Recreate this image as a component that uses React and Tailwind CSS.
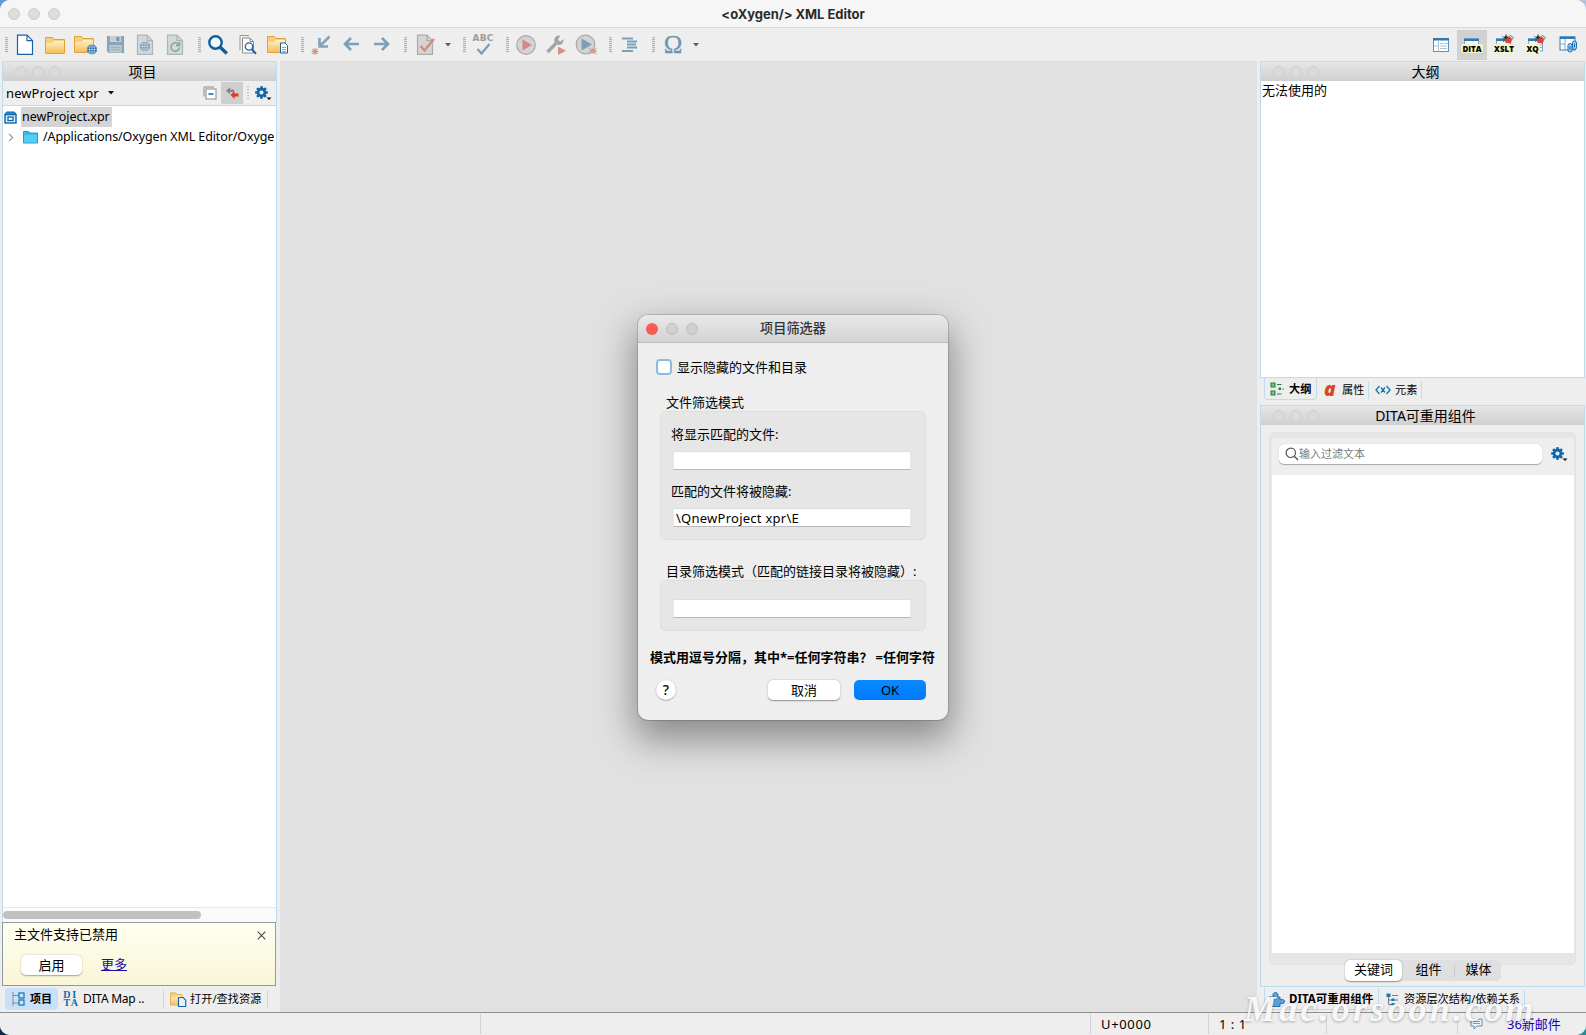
import React from "react";

function Slot({ w = "w-[30px]", children }) {
  return <div className={`flex h-full shrink-0 items-center justify-center ${w}`}>{children}</div>;
}

function Grip({ w = "w-[13px]" }) {
  return (
    <div className={`flex h-full shrink-0 items-center justify-end pr-[2px] ${w}`}>
      <div className="h-[16px] w-[3px] bg-[repeating-linear-gradient(to_bottom,#b4b4b4_0px,#b4b4b4_1px,#e4e4e4_1px,#e4e4e4_2px)]" />
    </div>
  );
}

function Caret({ color = "#5f5f5f" }) {
  return (
    <svg width="6" height="4" viewBox="0 0 6 4">
      <path d="M0 0h6L3 3.6z" fill={color} />
    </svg>
  );
}

const Doc = ({ fill = "#fff", stroke = "#1b62a4", children, ...p }) => (
  <svg width="22" height="22" viewBox="0 0 22 22" {...p}>
    <path d="M3.500 1.200h9.500l5.500 5.500V20.300h-15z" fill={fill} stroke={stroke} strokeWidth="1.2" />
    <path d="M13 1.200v5.500h5.500" fill="none" stroke={stroke} strokeWidth="1.2" />
    {children}
  </svg>
);

const FolderShape = ({ w = 20 }) => (
  <>
    <path d={`M0.5 18.5V2.5h7l1.5 2h${w - 9.5}v14z`} fill="#f7d07c" stroke="#e0a23c" />
    <path d={`M1 18V8h6.5l1.5-2h${w - 10}v12z`} fill="url(#folderFill)" />
  </>
);

const Globe = ({ x, y, r = 5, color = "#1f6aa5" }) => (
  <g transform={`translate(${x} ${y})`}>
    <circle r={r} fill={color} />
    <path d={`M${-r} 0H${r}M0 ${-r}V${r}M${-r + 1} ${-r / 2}H${r - 1}M${-r + 1} ${r / 2}H${r - 1}`} stroke="#d6e8f5" strokeWidth="0.6" fill="none" />
    <ellipse rx={r / 2} ry={r} fill="none" stroke="#d6e8f5" strokeWidth="0.6" />
  </g>
);

const SmallDoc = () => (
  <g>
    <path d="M0.5 0.5h4.5l2.5 2.5v7.5h-7z" fill="#fff" stroke="#1b62a4" />
    <path d="M2 5h4M2 7h4M2 9h4" stroke="#5b93bd" strokeWidth="0.8" />
  </g>
);

function Defs() {
  return (
    <svg className="absolute" width="0" height="0">
      <defs>
        <linearGradient id="folderFill" x1="0" y1="0" x2="0" y2="1">
          <stop offset="0" stopColor="#fff0c4" />
          <stop offset="1" stopColor="#f6bf58" />
        </linearGradient>
      </defs>
    </svg>
  );
}

function Gear() {
  return (
    <svg width="17" height="15" viewBox="0 0 17 15" className="shrink-0">
      <g transform="translate(6.5 6.5)">
        <circle r="3.4" fill="none" stroke="#0f66aa" strokeWidth="2.6" />
        {[0, 45, 90, 135, 180, 225, 270, 315].map((a) => (
          <rect key={a} x="-1.3" y="-6.3" width="2.6" height="2.8" fill="#0f66aa" transform={`rotate(${a})`} />
        ))}
      </g>
      <path d="M11.5 11.5h5l-2.5 2.6z" fill="#111" />
    </svg>
  );
}

function Toolbar() {
  return (
    <div className="flex h-[33px] shrink-0 items-center bg-[#eeeeee]">
      <Grip w="w-[10px]" />
      <Slot><Doc /></Slot>
      <Slot><svg width="21" height="20" viewBox="0 0 21 20"><FolderShape /></svg></Slot>
      <Slot>
        <svg width="24" height="21" viewBox="0 0 24 21" className="ml-[1px]"><FolderShape /><Globe x="18" y="15.5" /></svg>
      </Slot>
      <Slot>
        <svg width="19" height="19" viewBox="0 0 20 20">
          <path d="M1 1h18v18H3l-2-2z" fill="#87a4b8" />
          <rect x="4" y="1" width="12" height="6.5" fill="#c9d0d5" />
          <rect x="11" y="2" width="3" height="4.5" fill="#7593a8" />
          <rect x="3.5" y="10.5" width="13" height="8" fill="#bcc9d2" />
          <path d="M5 13h10M5 15.500h10" stroke="#98adbb" />
        </svg>
      </Slot>
      <Slot>
        <Doc fill="#d5d7d8" stroke="#b1b4b6"><Globe x="11" y="12.500" color="#7095b2" /></Doc>
      </Slot>
      <Slot>
        <Doc fill="#d5d7d8" stroke="#b1b4b6">
          <path d="M14.600 10.500a4.200 4.200 0 1 0 .8 3M15.500 8v3.500h-3.500" fill="none" stroke="#7cac84" strokeWidth="1.500" />
        </Doc>
      </Slot>
      <Grip />
      <Slot>
        <svg width="22" height="22" viewBox="0 0 22 22">
          <circle cx="8.500" cy="8.500" r="6.200" fill="#f4f8fb" stroke="#0f5d9f" strokeWidth="2.400" />
          <path d="M13 13l6.800 6.500" stroke="#0f5d9f" strokeWidth="3.400" />
        </svg>
      </Slot>
      <Slot>
        <svg width="20" height="22" viewBox="0 0 20 22">
          <path d="M2 16V1.500h9" fill="none" stroke="#999" />
          <path d="M4.500 19V4h7.500l3.500 3.500V19z" fill="#fff" stroke="#8b8b8b" />
          <path d="M12 4v3.500h3.500" fill="none" stroke="#8b8b8b" />
          <circle cx="11" cy="12.500" r="3.700" fill="#fff" stroke="#1b62a4" strokeWidth="1.300" />
          <path d="M13.700 15.200l4.300 4.500" stroke="#1b62a4" strokeWidth="2" />
        </svg>
      </Slot>
      <Slot>
        <svg width="22" height="21" viewBox="0 0 22 21"><FolderShape w={19} /><g transform="translate(13 8.500)"><SmallDoc /></g></svg>
      </Slot>
      <Grip />
      <Slot>
        <svg width="20" height="20" viewBox="0 0 20 20">
          <path d="M18.500 1.500L9 11M8.500 3v8.500H17" fill="none" stroke="#83a3b9" strokeWidth="2.600" />
          <path d="M4 13v7M.5 16.500h7M1.500 14l5 5M6.500 14l-5 5" stroke="#d39388" strokeWidth="1.100" />
        </svg>
      </Slot>
      <Slot>
        <svg width="17" height="14" viewBox="0 0 17 14" className="mb-[1px]"><path d="M16 7H2M8 1L2 7l6 6" fill="none" stroke="#7a9fb8" strokeWidth="2.600" /></svg>
      </Slot>
      <Slot>
        <svg width="17" height="14" viewBox="0 0 17 14" className="mb-[1px]"><path d="M1 7h14M9 1l6 6-6 6" fill="none" stroke="#7a9fb8" strokeWidth="2.600" /></svg>
      </Slot>
      <Grip />
      <Slot w="w-[32px]">
        <Doc fill="#d4d4d4" stroke="#ababab"><path d="M6.500 12l4 4.500L20 5" fill="none" stroke="#d58a80" strokeWidth="2.400" /></Doc>
      </Slot>
      <Slot w="w-[14px]"><Caret /></Slot>
      <Grip />
      <Slot>
        <div className="flex flex-col items-center">
          <span className="font-['DejaVu_Sans'] text-[9px] leading-[9px] font-bold tracking-[0.2px] text-[#9d9d9d]">ABC</span>
          <svg width="15" height="12" viewBox="0 0 15 12"><path d="M1.500 6l4 4.500L13.500 1" fill="none" stroke="#7a9fb8" strokeWidth="2.300" /></svg>
        </div>
      </Slot>
      <Grip />
      <Slot>
        <svg width="22" height="22" viewBox="0 0 22 22">
          <circle cx="11" cy="11" r="9.300" fill="#d3d3d3" stroke="#a8a8a8" strokeWidth="1.200" />
          <path d="M7.500 5.500v11l9.500-5.500z" fill="#d18a82" />
        </svg>
      </Slot>
      <Slot>
        <svg width="22" height="22" viewBox="0 0 22 22">
          <path d="M2.500 18L11 9.500" stroke="#a3a3a3" strokeWidth="3.400" />
          <path d="M15 1.500a5 5 0 0 0-5.500 6.500l3.500 3a5 5 0 0 0 5.500-6l-3.500 2.800-2-2z" fill="#a3a3a3" />
          <path d="M13 12.500v8.500l8-4.200z" fill="#d58f86" />
        </svg>
      </Slot>
      <Slot>
        <svg width="22" height="22" viewBox="0 0 22 22">
          <circle cx="10.500" cy="10.500" r="9.300" fill="#d3d3d3" stroke="#a8a8a8" strokeWidth="1.200" />
          <path d="M6.500 4.500v12L17 10.500z" fill="#7a9fb8" />
          <circle cx="18" cy="17" r="2.600" fill="#d09a92" />
          <path d="M14 14l8 6.500M22 14l-8 6.500M14 17.200h8" stroke="#d09a92" strokeWidth="0.900" />
        </svg>
      </Slot>
      <Grip />
      <Slot>
        <svg width="17" height="16" viewBox="0 0 17 16">
          <path d="M1 1.500h11M6 4.500h10M6 7.500h9M6 10.500h10M1 14h11" stroke="#7a9fb8" strokeWidth="1.900" />
        </svg>
      </Slot>
      <Grip />
      <Slot w="w-[32px]">
        <span className="font-['Liberation_Serif'] text-[25px] leading-[24px] text-[#6d96b3] [-webkit-text-stroke:0.3px_#6d96b3]">Ω</span>
      </Slot>
      <Slot w="w-[14px]"><Caret /></Slot>
      <div className="ml-auto flex h-full items-center pr-[1px]">
        <Slot w="w-[29px]"><LayoutIcon /></Slot>
        <div className="ml-[2px] flex h-[30px] w-[30px] items-center justify-center bg-[#d1d1d1]"><LabelIcon text="DITA" /></div>
        <div className="flex w-[34px] items-center justify-center"><LabelIcon text="XSLT" bug /></div>
        <div className="flex w-[30px] items-center justify-center"><LabelIcon text="XQ" bug /></div>
        <Slot w="w-[34px]">
          <svg width="19" height="17" viewBox="0 0 19 17">
            <rect x="1" y="1" width="15" height="13" fill="#fff" stroke="#3b7cb0" />
            <rect x="1" y="0.500" width="15" height="2.500" fill="#2f79b6" />
            <path d="M6 3v11M1 8h5" stroke="#7ea9ca" />
            <rect x="9" y="7.500" width="4" height="8.500" rx="2" fill="#a9d2f0" stroke="#1b69ac" />
            <rect x="13.500" y="5" width="4" height="8.500" rx="2" fill="#a9d2f0" stroke="#1b69ac" />
            <path d="M11 14V10M15.500 11.500v-4" stroke="#1b69ac" />
          </svg>
        </Slot>
      </div>
    </div>
  );
}

function LayoutIcon() {
  return (
    <svg width="16" height="14" viewBox="0 0 16 14">
      <rect x="0.500" y="0.500" width="15" height="13" fill="#fff" stroke="#5c93bd" />
      <rect x="0" y="0" width="16" height="2.500" fill="#2f79b6" />
      <path d="M5.500 2.500v11M1 8h4M7 5.500h4M12 5.500h3M7 8h7M7 10.500h7" stroke="#a5c5de" />
    </svg>
  );
}

function LabelIcon({ text, bug = false }) {
  return (
    <div className={`flex w-[21px] flex-col ${text === "XQ" ? "items-start" : "items-center"}`}>
      <svg width="20" height="8" viewBox="0 0 20 8" className="overflow-visible">
        <rect x="2.500" y="3" width="14" height={text === "XQ" ? 12 : 6} fill="#f5f9fc" stroke="#7fabcd" />
        <rect x="2" y="2.500" width="15" height="2.500" fill="#2f79b6" />
        {text === "XQ" && <path d="M13 9h3M13 11.500h3" stroke="#7fabcd" />}
        {bug && (
          <g>
            <path d="M8 0l9 8M17-1l-8 7M12-2v9M9 3h10M17 0l3 2" stroke="#444" strokeWidth="0.700" />
            <circle cx="14.500" cy="4" r="3.300" fill="#dc4038" />
            <circle cx="12" cy="1.200" r="1.700" fill="#333" />
          </g>
        )}
      </svg>
      <span className="relative rounded-[2px] bg-[#f6f3c4] px-[1px] font-['Open_Sans'] text-[8px] leading-[9px] font-extrabold text-black">{text}</span>
    </div>
  );
}

function PanelHeader({ title }) {
  return (
    <div className="grid h-[20px] shrink-0 grid-cols-[1fr_auto_1fr] items-center border-t border-[#bcdcf2] bg-linear-to-b from-[#e6e6e6] to-[#cfcfcf]">
      <div className="flex gap-[5px] pl-[12px]">
        {[0, 1, 2].map((i) => (
          <div key={i} className="h-[12px] w-[12px] rounded-full border border-[#cfcfcf] bg-[#dadada]" />
        ))}
      </div>
      <div className="pt-[1px] pl-[6px] text-[14px] leading-[18px]">{title}</div>
      <div />
    </div>
  );
}

function LeftPanel() {
  return (
    <div className="flex w-[280px] shrink-0 flex-col pl-[2px]">
      <div className="flex h-[862px] w-[275px] flex-col border-x border-[#bcdcf2]">
        <PanelHeader title="项目" />
        <div className="flex h-[25px] shrink-0 items-center border-b border-[#bcdcf2] pl-[3px]">
          <span className="w-[94px] pt-[2px] text-[13px] tracking-[0.1px] whitespace-nowrap">newProject xpr</span>
          <span className="ml-[8px]"><Caret color="#111" /></span>
          <svg width="14" height="14" viewBox="0 0 14 14" className="ml-[89px] shrink-0">
            <path d="M1 10.500V1h10" fill="none" stroke="#8a8a8a" />
            <rect x="3" y="3" width="10" height="10" fill="#fff" stroke="#8a8a8a" />
            <path d="M5.500 8h5" stroke="#1b62a4" strokeWidth="1.300" />
          </svg>
          <div className="ml-[4px] flex h-[22px] w-[22px] shrink-0 items-center justify-center bg-[#cfcfcf]">
            <svg width="13" height="12" viewBox="0 0 13 12">
              <path d="M0 3.800L4 .3v2.200h4v2.600H4v2.200z" fill="#868686" />
              <path d="M4.500 8L8.500 4v2.600H12.500v2.800H8.500V12z" fill="#dd3d22" />
            </svg>
          </div>
          <div className="mr-[6px] ml-[4px] h-[14px] w-[2px] shrink-0 bg-[repeating-linear-gradient(to_bottom,#bdbdbd_0px,#bdbdbd_1px,#eeeeee_1px,#eeeeee_3px)]" />
          <Gear />
        </div>
        <div className="min-h-0 flex-1 overflow-hidden bg-white pt-[1px]">
          <div className="flex h-[20px] items-center">
            <svg width="13" height="13" viewBox="0 0 13 13" className="ml-[1px] shrink-0">
              <path d="M1 3.500L2.500 1h8L12 3.500z" fill="#3d90c9" stroke="#0f66aa" />
              <rect x="1" y="3.500" width="11" height="8.500" fill="#d7ecfa" stroke="#0f66aa" strokeWidth="1.400" />
              <rect x="4" y="6" width="5" height="3.500" fill="#fff" stroke="#0f66aa" strokeWidth="1.300" />
            </svg>
            <span className="ml-[4px] flex h-[20px] w-[91px] items-center bg-[#d4d4d4] pl-[1px] text-[12.500px] tracking-[-0.020px] whitespace-nowrap">newProject.xpr</span>
          </div>
          <div className="flex h-[20px] items-center">
            <svg width="6" height="9" viewBox="0 0 6 9" className="ml-[5px] shrink-0"><path d="M1 .8l3.700 3.700L1 8.200" fill="none" stroke="#9a9a9a" strokeWidth="1.200" /></svg>
            <svg width="15" height="14" viewBox="0 0 15 14" className="ml-[9px] shrink-0">
              <path d="M0.500 13V1.500h5L7 3h7.500v10z" fill="#3bb7e8" stroke="#1f9fd3" />
              <path d="M1 12.500V5h13v7.500z" fill="#57cdf6" />
            </svg>
            <span className="ml-[5px] text-[12.500px] tracking-[-0.110px] whitespace-nowrap">/Applications/Oxygen XML Editor/Oxyge</span>
          </div>
        </div>
        <div className="h-[16px] shrink-0 border-t border-[#e8e8e8] bg-[#fafafa] pt-[3px]">
          <div className="h-[8px] w-[198px] rounded-full bg-[#c1c1c1]" />
        </div>
      </div>
      <div className="-mt-[1px] flex h-[64px] w-[274px] shrink-0 flex-col border border-[#8d9da5] bg-linear-to-b from-[#fffff0] to-[#f9f5d6] px-[11px]">
        <div className="flex h-[24px] items-center justify-between">
          <span className="text-[13px]">主文件支持已禁用</span>
          <svg width="9" height="9" viewBox="0 0 9 9" className="-mr-[2px]"><path d="M.7.700l7.600 7.600M8.300.700L.7 8.300" stroke="#444" strokeWidth="1.100" /></svg>
        </div>
        <div className="mt-[7px] flex h-[22px] items-center">
          <button className="ml-[7px] h-[20px] w-[61px] rounded-[5px] bg-white text-[13px] leading-[18px] shadow-[0_0.5px_1.5px_rgba(0,0,0,0.35)]">启用</button>
          <a className="ml-[19px] text-[13px] text-[#1a0dab] underline">更多</a>
        </div>
      </div>
      <div className="mt-[1px] flex h-[23px] items-center text-[12px] leading-[20px]">
        <div className="ml-[3px] flex h-[22px] w-[53px] items-center rounded-[4px] bg-[#c8e1f7] pl-[7px]">
          <svg width="13" height="14" viewBox="0 0 13 14">
            <path d="M1 0v14M1 3.500h6M1 11h6" fill="none" stroke="#8a8a8a" />
            <rect x="7" y="1" width="5" height="5" fill="#cbe6f8" stroke="#1f79b8" strokeWidth="1.300" />
            <rect x="7" y="8" width="5" height="5" fill="#cbe6f8" stroke="#1f79b8" strokeWidth="1.300" />
          </svg>
          <span className="ml-[5px] text-[11px] font-bold">项目</span>
        </div>
        <div className="ml-[5px] flex w-[101px] items-center border-r border-[#bcdcf2]">
          <div className="grid w-[15px] grid-cols-2 justify-items-center font-['Liberation_Serif'] text-[10px] leading-[8px] font-bold text-[#0f6aa8]">
            <span>D</span><span>I</span><span>T</span><span>A</span>
          </div>
          <span className="ml-[5px] text-[12px] tracking-[-0.25px] whitespace-nowrap">DITA Map ..</span>
        </div>
        <div className="flex h-[18px] w-[104px] items-center border-r border-[#bcdcf2]">
          <svg width="17" height="16" viewBox="0 0 22 21" className="ml-[6px] shrink-0"><FolderShape w={16} /><path d="M11 8.500h6l3.500 3.500v8.500H11z" fill="#e7f3fb" stroke="#1b62a4" strokeWidth="1.500" /></svg>
          <span className="ml-[3px] text-[11.200px] whitespace-nowrap">打开/查找资源</span>
        </div>
      </div>
    </div>
  );
}

function RightPanel() {
  return (
    <div className="flex w-[329px] shrink-0 flex-col pr-[1px] pl-[3px]">
      <div className="flex h-[317px] shrink-0 flex-col border-x border-b border-[#bcdcf2]">
        <PanelHeader title="大纲" />
        <div className="flex-1 bg-white pl-[1px] text-[13px] leading-[18px]">无法使用的</div>
      </div>
      <div className="flex h-[27px] items-start pl-[4px] text-[11.200px] leading-[22px]">
        <div className="flex h-[22px] w-[53px] items-center rounded-b-[4px] border-x border-b border-[#bcdcf2] pl-[5px]">
          <svg width="14" height="14" viewBox="0 0 14 14">
            <rect x="1" y="1" width="4" height="4" fill="#76c28b" stroke="#24803d" />
            <rect x="1" y="9" width="4" height="4" fill="#76c28b" stroke="#24803d" />
            <path d="M7 2.500h4.500M7 12h4.500M12.500 7h1.500" stroke="#24803d" />
            <rect x="8.500" y="5.500" width="2.500" height="2.500" fill="#24803d" />
          </svg>
          <span className="ml-[5px] pt-[1px] font-bold">大纲</span>
        </div>
        <div className="mt-[3px] flex h-[18px] w-[52px] items-center border-r border-[#bcdcf2] pl-[7px]">
          <span className="w-[13px] pb-[3px] font-['Open_Sans'] text-[19px] leading-[16px] font-extrabold text-[#dc4521] italic">a</span>
          <span className="ml-[5px]">属性</span>
        </div>
        <div className="mt-[3px] flex h-[18px] w-[53px] items-center border-r border-[#bcdcf2] pl-[6px]">
          <svg width="16" height="10" viewBox="0 0 16 10"><path d="M4.500 1L1 5l3.500 4M11.500 1L15 5l-3.500 4M6 2.500l4 5M10 2.500l-4 5" fill="none" stroke="#1b71b3" strokeWidth="1.300" /></svg>
          <span className="ml-[4px]">元素</span>
        </div>
      </div>
      <div className="flex h-[582px] shrink-0 flex-col border-x border-b border-[#bcdcf2]">
        <PanelHeader title="DITA可重用组件" />
        <div className="mx-[8px] mt-[7px] flex h-[533px] flex-col rounded-[5px] border border-[#e2e2e2] bg-[#e6e6e6] pr-[1px] pl-[2px] pt-[5px] pb-[11px]">
          <div className="flex h-[37px] shrink-0 items-start bg-[#eeeeee] pt-[6px] pl-[7px]">
            <div className="flex h-[20px] w-[263px] items-center rounded-[5px] bg-white pl-[6px] shadow-[0_0.5px_1px_rgba(0,0,0,0.3)]">
              <svg width="14" height="14" viewBox="0 0 14 14"><circle cx="5.800" cy="5.800" r="4.700" fill="none" stroke="#555" strokeWidth="1.200" /><path d="M9.300 9.300l3.800 3.800" stroke="#555" strokeWidth="1.400" /></svg>
              <span className="text-[11px] leading-[20px] text-[#7b7b7b]">输入过滤文本</span>
            </div>
            <div className="mt-[3px] ml-[9px]"><Gear /></div>
          </div>
          <div className="flex-1 bg-white" />
        </div>
        <div className="relative -mt-[5px] ml-[84px] flex h-[21px] w-[156px] items-center rounded-[5px] bg-[#dfdfdf] text-[13px] leading-[19px]">
          <div className="h-[21px] w-[57px] rounded-[5px] bg-white text-center shadow-[0_0.5px_1.5px_rgba(0,0,0,0.4)]">关键词</div>
          <div className="h-[21px] w-[52px] pl-[1px] text-center">组件</div>
          <div className="h-[12px] w-px bg-[#c9c9c9]" />
          <div className="h-[21px] w-[46px] pl-[1px] text-center">媒体</div>
        </div>
      </div>
      <div className="flex h-[24px] items-center pl-[4px] text-[11.200px] leading-[20px]">
        <div className="flex h-[22px] w-[115px] items-center border-x border-b border-[#bcdcf2] pl-[3px]">
          <svg width="17" height="16" viewBox="0 0 17 16" className="shrink-0">
            <path d="M1 6h4.500c-1.500-3 .5-4.500 2-4.500s3.500 1.500 2 4.500H12v3c3-1.500 4.500 0 4.500 1.500s-1.500 3-4.500 1.500v3.500H3V12z" fill="#5aa3d8" stroke="#1f6fad" />
          </svg>
          <span className="ml-[4px] text-[11.500px] font-bold whitespace-nowrap">DITA可重用组件</span>
        </div>
        <div className="flex h-[18px] w-[146px] items-center border-r border-[#bcdcf2] pl-[7px]">
          <svg width="13" height="13" viewBox="0 0 13 13">
            <path d="M2.500 4v7.500H6M2.500 7H6M6 2.500h6M8 7h4M8 11.500h4" fill="none" stroke="#6a7f8d" />
            <rect x="0.500" y="0.500" width="4" height="3.500" fill="#1f79b8" />
            <rect x="5.500" y="5.500" width="3" height="2.500" fill="#1f79b8" />
            <rect x="5.500" y="10" width="3" height="2.500" fill="#1f79b8" />
          </svg>
          <span className="ml-[5px] whitespace-nowrap">资源层次结构/依赖关系</span>
        </div>
      </div>
    </div>
  );
}

function Field({ value = "" }) {
  return (
    <div className="h-[19px] w-[238px] border border-t-[#dedede] border-r-[#e6e6e6] border-b-[#b8b8b8] border-l-[#e6e6e6] bg-white pl-[2px] text-[13px] leading-[18px] tracking-[0.25px]">{value}</div>
  );
}

function Dialog() {
  return (
    <div className="absolute top-[315px] left-[638px] flex h-[405px] w-[310px] flex-col overflow-hidden rounded-[10px] bg-[#eeeeee] text-[13px] leading-[20px] shadow-[0_0_0_1px_rgba(0,0,0,0.15),0_16px_36px_4px_rgba(0,0,0,0.38)]">
      <div className="grid h-[28px] shrink-0 grid-cols-[1fr_auto_1fr] items-center border-b border-[#bdbdbd] bg-linear-to-b from-[#e9e9e9] to-[#d3d3d3]">
        <div className="flex gap-[8px] pl-[8px]">
          <div className="h-[12px] w-[12px] rounded-full bg-[#fc5b54]" />
          <div className="h-[12px] w-[12px] rounded-full border border-[#bfbfbf] bg-[#d0d0d0]" />
          <div className="h-[12px] w-[12px] rounded-full border border-[#bfbfbf] bg-[#d0d0d0]" />
        </div>
        <div className="pb-[1px] text-[13.200px] font-medium text-[#333]">项目筛选器</div>
        <div />
      </div>
      <div className="mt-[14px] ml-[18px] flex h-[20px] items-center">
        <div className="h-[16px] w-[16px] rounded-[4px] border-2 border-[#8dbbe9] bg-white" />
        <span className="ml-[5px]">显示隐藏的文件和目录</span>
      </div>
      <div className="mt-[15px] ml-[28px] h-[19px]">文件筛选模式</div>
      <div className="ml-[22px] h-[129px] w-[266px] shrink-0 rounded-[5px] border border-[#dedede] bg-[#e6e6e6] pl-[10px]">
        <div className="mt-[12px] h-[20px]">将显示匹配的文件:</div>
        <div className="mt-[7px] ml-[2px]"><Field /></div>
        <div className="mt-[11px] h-[20px]">匹配的文件将被隐藏:</div>
        <div className="mt-[7px] ml-[2px]"><Field value="\QnewProject xpr\E" /></div>
      </div>
      <div className="mt-[21px] ml-[28px] h-[19px] whitespace-nowrap">目录筛选模式（匹配的链接目录将被隐藏）:</div>
      <div className="ml-[22px] h-[51px] w-[266px] shrink-0 rounded-[5px] border border-[#dedede] bg-[#e6e6e6] pt-[18px] pl-[12px]">
        <Field />
      </div>
      <div className="mt-[16px] ml-[12px] h-[20px] font-bold whitespace-nowrap">模式用逗号分隔，其中*=任何字符串？<span className="ml-[3px]">=任何字符</span></div>
      <div className="mt-[13px] flex h-[20px] items-center pl-[18px]">
        <div className="h-[20px] w-[20px] rounded-full bg-white text-center text-[14px] leading-[20px] font-medium shadow-[0_0.5px_1.5px_rgba(0,0,0,0.4)]">?</div>
        <button className="ml-[92px] h-[20px] w-[72px] rounded-[5px] bg-white leading-[19px] shadow-[0_0.5px_1.5px_rgba(0,0,0,0.4)]">取消</button>
        <button className="ml-[14px] h-[20px] w-[72px] rounded-[5px] bg-linear-to-b from-[#0a8aff] to-[#0079fb] leading-[19px]">OK</button>
      </div>
    </div>
  );
}

function StatusBar() {
  return (
    <div className="flex h-[23px] shrink-0 items-center border-t border-[#8f8f8f] bg-[#eeeeee] text-[13px] leading-[20px]">
      <div className="h-[20px] w-[481px] border-r border-[#d2d2d2]" />
      <div className="h-[20px] w-[610px] border-r border-[#d2d2d2]" />
      <div className="h-[20px] w-[118px] border-r border-[#d2d2d2] pl-[10px] tracking-[0.65px]">U+0000</div>
      <div className="h-[20px] w-[118px] border-r border-[#d2d2d2] pl-[10px] tracking-[0.5px]">1 : 1</div>
      <div className="h-[20px] w-[131px] border-r border-[#d2d2d2]" />
      <svg width="13" height="12" viewBox="0 0 13 12" className="ml-[12px]">
        <path d="M1 1h11v7H7l-3 3V8H1z" fill="#eef6fb" stroke="#5f8cae" />
        <path d="M3 3.500h7M3 5.500h7" stroke="#5f8cae" strokeWidth="0.800" />
      </svg>
      <span className="ml-[24px] text-[#1500b8]">36新邮件</span>
    </div>
  );
}

export default function App() {
  return (
    <div className="relative h-[1035px] w-[1586px] overflow-hidden bg-[linear-gradient(to_right,#0d2b48_50%,#2a8c93_50%)] font-['Noto_Sans','Noto_Sans_CJK_SC',sans-serif] text-black">
      <Defs />
      <div className="absolute top-0 left-0 h-[20px] w-full bg-[linear-gradient(to_right,#5b9fd6_50%,#b3c4de_50%)]" />
      <div className="relative flex h-full w-full flex-col overflow-hidden rounded-[10px] bg-[#eeeeee]">
        <div className="grid h-[28px] shrink-0 grid-cols-[1fr_auto_1fr] items-center border-b border-[#d8d8d8] bg-[#f6f6f6]">
          <div className="flex gap-[8px] pl-[8px]">
            {[0, 1, 2].map((i) => (
              <div key={i} className="h-[12px] w-[12px] rounded-full border border-[#cdcdcd] bg-[#dddddd]" />
            ))}
          </div>
          <div className="font-['Inter'] text-[13px] leading-[26px] font-bold tracking-[-0.05px] text-[#2b2b2b]">&lt;oXygen/&gt; XML Editor</div>
          <div />
        </div>
        <Toolbar />
        <div className="flex h-[951px] shrink-0">
          <LeftPanel />
          <div className="flex-1 bg-[#e1e1e1]" />
          <RightPanel />
        </div>
        <StatusBar />
      </div>
      <Dialog />
      <div className="absolute top-[986px] left-[1244px] font-['Liberation_Serif'] text-[36px] leading-[46px] font-bold tracking-[3.2px] whitespace-nowrap text-white/90 italic [text-shadow:0_1px_3px_rgba(0,0,0,0.3)]">
        Mac.orsoon.com
      </div>
    </div>
  );
}
